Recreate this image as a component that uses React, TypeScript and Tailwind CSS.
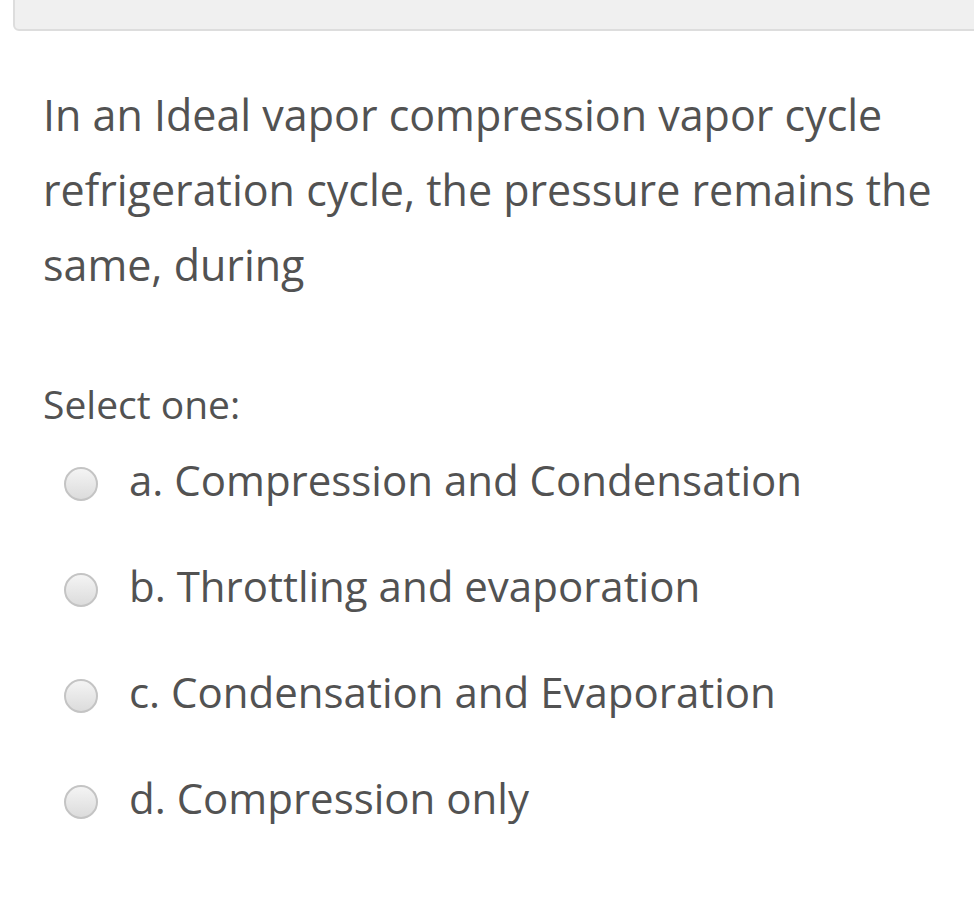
const options = [
  'a. Compression and Condensation',
  'b. Throttling and evaporation',
  'c. Condensation and Evaporation',
  'd. Compression only',
];

function Radio() {
  return (
    <span className="block w-[34px] h-[34px] rounded-full border-2 border-[#c4c4c4] bg-gradient-to-b from-[#f4f4f4] to-[#dcdcdc] shrink-0 mt-[15px]" />
  );
}

export default function App() {
  return (
    <div className="w-[974px] h-[917px] bg-white overflow-hidden text-[#525252]" style={{ fontFamily: '"Open Sans", sans-serif' }}>
      {/* header strip */}
      <div className="ml-[13px] -mt-[10px] h-[41px] bg-[#f0f0f0] border-2 border-[#dddddd] rounded-[6px] mr-[-20px]" />

      <div className="pl-[43px] pr-[20px]">
        <p className="mt-[46px] text-[43px] leading-[75px]">
          In an Ideal vapor compression vapor cycle refrigeration cycle, the pressure remains the same, during
        </p>

        <p className="mt-[72px] text-[39px] leading-[60px]">Select one:</p>

        <div className="mt-[18px] flex flex-col">
          {options.map((o) => (
            <label key={o} className="flex items-start h-[106px] pl-[21px]">
              <Radio />
              <span className="ml-[31px] text-[42px] leading-[56px]">{o}</span>
            </label>
          ))}
        </div>
      </div>
    </div>
  );
}
